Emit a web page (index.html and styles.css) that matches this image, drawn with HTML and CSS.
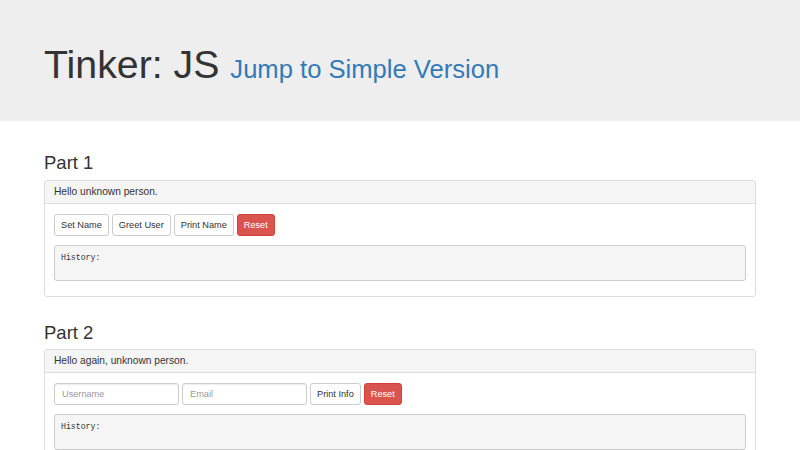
FILE: index.html
```html
<!DOCTYPE html>
<html>
<head>
<meta charset="utf-8">
<title>Tinker: JS</title>
<link rel="stylesheet" href="styles.css">
</head>
<body>
<header class="jumbotron">
  <h1 class="title">Tinker: JS <a class="title-link" href="#">Jump to Simple Version</a></h1>
</header>
<main class="container">
  <section class="part">
    <h2 class="part-title">Part 1</h2>
    <div class="panel">
      <div class="panel-heading">Hello unknown person.</div>
      <div class="panel-body">
        <div class="controls">
          <button class="btn">Set Name</button>
          <button class="btn">Greet User</button>
          <button class="btn">Print Name</button>
          <button class="btn btn-danger">Reset</button>
        </div>
        <pre class="history">History:</pre>
      </div>
    </div>
  </section>
  <section class="part">
    <h2 class="part-title">Part 2</h2>
    <div class="panel">
      <div class="panel-heading">Hello again, unknown person.</div>
      <div class="panel-body">
        <div class="controls">
          <input class="field" type="text" placeholder="Username">
          <input class="field" type="text" placeholder="Email">
          <button class="btn">Print Info</button>
          <button class="btn btn-danger">Reset</button>
        </div>
        <pre class="history">History:</pre>
      </div>
    </div>
  </section>
</main>
</body>
</html>
```
FILE: styles.css
```css
* { box-sizing: border-box; }
html, body { margin: 0; padding: 0; }
body {
  font-family: "Liberation Sans", Arial, sans-serif;
  color: #333;
  background: #fff;
}
.jumbotron {
  background: #eee;
  height: 121px;
  padding: 45px 44px 0;
}
.title {
  margin: 0;
  font-size: 39.3px;
  line-height: 1;
  font-weight: normal;
  color: #333;
}
.title-link {
  font-size: 25.6px;
  color: #337ab7;
  text-decoration: none;
}
.container {
  padding: 7px 44px 0;
}
.part-title {
  margin: 27px 0 7px;
  font-size: 18.5px;
  line-height: 1;
  font-weight: normal;
}
.part:first-child .part-title {
  margin-top: 26px;
}
.panel {
  border: 1px solid #ddd;
  border-radius: 3px;
  background: #fff;
}
.panel-heading {
  background: #f5f5f5;
  border-bottom: 1px solid #ddd;
  height: 23px;
  line-height: 22px;
  padding: 0 9px;
  font-size: 10.2px;
  border-radius: 2px 2px 0 0;
}
.panel-body {
  padding: 10px 9px 15px;
}
.controls {
  display: flex;
  gap: 3px;
}
.btn {
  height: 22px;
  padding: 0 6px;
  font-family: "Liberation Sans", Arial, sans-serif;
  font-size: 9.2px;
  color: #333;
  background: #fff;
  border: 1px solid #ccc;
  border-radius: 3px;
}
.btn-danger {
  color: #fff;
  background: #d9534f;
  border-color: #d43f3a;
}
.field {
  width: 125px;
  height: 22px;
  padding: 0 7px;
  font-family: "Liberation Sans", Arial, sans-serif;
  font-size: 9.2px;
  color: #555;
  border: 1px solid #ccc;
  border-radius: 3px;
  box-shadow: inset 0 1px 1px rgba(0,0,0,0.075);
}
.field::placeholder { color: #999; }
.history {
  margin: 9px 0 0;
  height: 36px;
  padding: 6px 6px;
  font-family: "Liberation Mono", "Courier New", monospace;
  font-size: 8.2px;
  line-height: 11px;
  color: #333;
  background: #f5f5f5;
  border: 1px solid #ccc;
  border-radius: 3px;
}
```
